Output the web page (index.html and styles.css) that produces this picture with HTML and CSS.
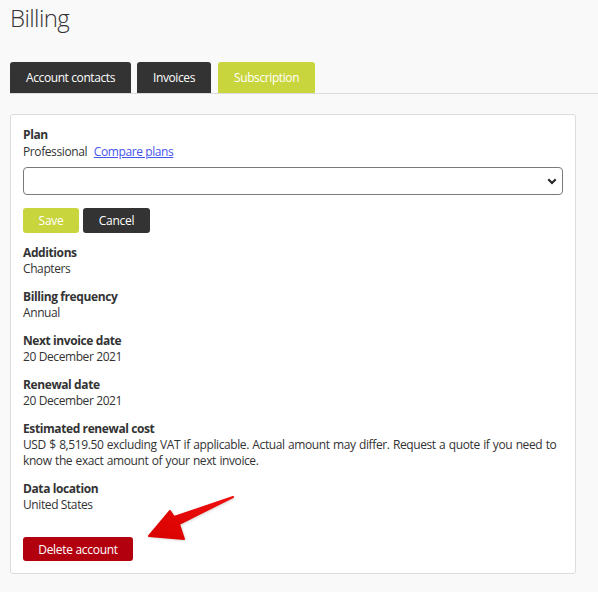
FILE: index.html
```html
<!DOCTYPE html>
<html lang="en">
<head>
<meta charset="utf-8">
<title>Billing</title>
<link rel="stylesheet" href="styles.css">
</head>
<body>
  <h1 class="page-title">Billing</h1>

  <nav class="tabs">
    <a class="tab" href="#">Account contacts</a>
    <a class="tab" href="#">Invoices</a>
    <a class="tab tab-active" href="#">Subscription</a>
  </nav>

  <section class="card">
    <div class="field">
      <div class="label">Plan</div>
      <div class="value">Professional <a class="link" href="#">Compare plans</a></div>
    </div>

    <select class="plan-select" aria-label="Plan"><option></option></select>

    <div class="actions">
      <button class="btn btn-save">Save</button>
      <button class="btn btn-cancel">Cancel</button>
    </div>

    <div class="field">
      <div class="label">Additions</div>
      <div class="value">Chapters</div>
    </div>
    <div class="field">
      <div class="label">Billing frequency</div>
      <div class="value">Annual</div>
    </div>
    <div class="field">
      <div class="label">Next invoice date</div>
      <div class="value">20 December 2021</div>
    </div>
    <div class="field">
      <div class="label">Renewal date</div>
      <div class="value">20 December 2021</div>
    </div>
    <div class="field">
      <div class="label">Estimated renewal cost</div>
      <div class="value value-note">USD $ 8,519.50 excluding VAT if applicable. Actual amount may differ. Request a quote if you need to know the exact amount of your next invoice.</div>
    </div>
    <div class="field">
      <div class="label">Data location</div>
      <div class="value">United States</div>
    </div>

    <button class="btn btn-delete">Delete account</button>

    <svg class="pointer" width="92" height="54" viewBox="0 0 92 54" aria-hidden="true">
      <defs>
        <linearGradient id="arrowFill" x1="0" y1="1" x2="1" y2="0">
          <stop offset="0" stop-color="#d80000"/>
          <stop offset="1" stop-color="#f01010"/>
        </linearGradient>
      </defs>
      <polygon points="4,42 25,17 29,23 88,3 34,30 39,45" fill="url(#arrowFill)" stroke="url(#arrowFill)" stroke-width="2" stroke-linejoin="round"/>
    </svg>
  </section>
</body>
</html>
```

FILE: styles.css
```css
html, body {
  margin: 0;
  padding: 0;
}

body {
  background: #f9f9f9;
  font-family: "Open Sans", "Liberation Sans", sans-serif;
  color: #333;
  font-size: 12px;
  line-height: 16px;
  letter-spacing: -0.4px;
  width: 598px;
  height: 592px;
  overflow: hidden;
}

.page-title {
  margin: 3px 0 0 10px;
  font-size: 24px;
  line-height: 29px;
  font-weight: 300;
  letter-spacing: -0.6px;
  color: #333;
}

.tabs {
  display: flex;
  gap: 6px;
  margin: 30px 0 0 10px;
  border-bottom: 1px solid #dcdcdc;
}

.tab {
  display: block;
  height: 31px;
  line-height: 31px;
  padding: 0 16px;
  border-radius: 3px 3px 0 0;
  background: #333;
  color: #fff;
  text-decoration: none;
  font-size: 12px;
}

.tab-active {
  background: #c9d53d;
  margin-left: 1px;
}

.card {
  position: relative;
  margin: 20px 22px 0 10px;
  background: #fff;
  border: 1px solid #dcdcdc;
  border-radius: 3px;
  padding: 12px 12px 12px;
}

.field {
  margin-bottom: 12px;
}

.card > .field:first-child {
  margin-bottom: 0;
}

.label {
  font-weight: 700;
  line-height: 16px;
}

.value {
  line-height: 16px;
}

.value-note {
  word-spacing: 0.7px;
}

.card > .field:first-child .value {
  line-height: 17px;
}

.link {
  color: #4654ee;
  text-decoration: underline;
  margin-left: 4px;
}

.plan-select {
  display: block;
  width: 540px;
  height: 28px;
  margin: 7px 0 0;
  border: 1px solid #7a7a7a;
  border-radius: 4px;
  background: #fff url("data:image/svg+xml,%3Csvg xmlns='http://www.w3.org/2000/svg' width='10' height='7' viewBox='0 0 10 7'%3E%3Cpath d='M1.3 1.3 5 5 8.7 1.3' fill='none' stroke='%23222' stroke-width='2'/%3E%3C/svg%3E") no-repeat right 5px center;
  -webkit-appearance: none;
  appearance: none;
  font: inherit;
}

.actions {
  display: flex;
  gap: 4px;
  margin: 13px 0 12px;
}

.btn {
  border: 0;
  border-radius: 3px;
  font-family: inherit;
  font-size: 12px;
  letter-spacing: -0.3px;
  color: #fff;
  height: 25px;
  padding: 0;
  cursor: pointer;
}

.btn-save {
  width: 56px;
  background: #c9d53d;
}

.btn-cancel {
  width: 67px;
  background: #333;
}

.btn-delete {
  display: block;
  width: 110px;
  height: 24px;
  margin-top: 24px;
  background: #b3000f;
}

.pointer {
  position: absolute;
  left: 134px;
  top: 379px;
  filter: drop-shadow(1px 1px 1px rgba(0, 0, 0, 0.15));
}
```
